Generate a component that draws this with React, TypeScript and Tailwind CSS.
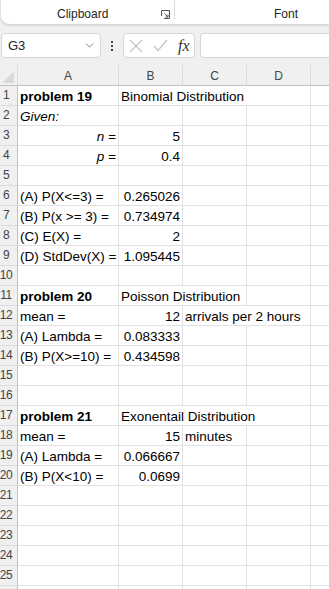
import React from 'react'
import {ChevronDown} from 'lucide-react'

interface ICell {
  span?: number
  text?: string
  right?: boolean
  bold?: boolean
  italic?: boolean
}

const colWidths = [101, 64, 64, 64]

const widthClass: {[key: number]: string} = {
  64: 'w-[64px]',
  101: 'w-[101px]',
  128: 'w-[128px]',
  192: 'w-[192px]',
}

const L = (text: string): ICell => ({text})
const R = (text: string): ICell => ({text, right: true})

const rows: ICell[][] = [
  [{text: 'problem 19', bold: true}, {text: 'Binomial Distribution', span: 3}],
  [{text: 'Given:', italic: true}],
  [{text: 'n =', italic: true, right: true}, R('5')],
  [{text: 'p =', italic: true, right: true}, R('0.4')],
  [],
  [L('(A) P(X<=3) ='), R('0.265026')],
  [L('(B) P(x >= 3) ='), R('0.734974')],
  [L('(C) E(X) ='), R('2')],
  [L('(D) StdDev(X) ='), R('1.095445')],
  [],
  [{text: 'problem 20', bold: true}, {text: 'Poisson Distribution', span: 2}],
  [L('mean ='), R('12'), {text: 'arrivals per 2 hours', span: 2}],
  [L('(A) Lambda ='), R('0.083333')],
  [L('(B) P(X>=10) ='), R('0.434598')],
  [],
  [],
  [{text: 'problem 21', bold: true}, {text: 'Exonentail Distribution', span: 3}],
  [L('mean ='), R('15'), L('minutes')],
  [L('(A) Lambda ='), R('0.066667')],
  [L('(B) P(X<10) ='), R('0.0699')],
  [],
  [],
  [],
  [],
  [],
  [],
]

// fill each row out to four cells (A..D), honouring spans
const layoutRow = (cells: ICell[]) => {
  const out: {cell: ICell; width: number}[] = []
  let col = 0
  let i = 0
  while (col < colWidths.length) {
    const cell = cells[i] || {}
    const span = cell.span || 1
    let width = 0
    for (let k = col; k < col + span; k++) width += colWidths[k]
    out.push({cell, width})
    col += span
    i++
  }
  return out
}

const LauncherIcon = () => (
  <svg width="9" height="9" viewBox="0 0 9 9" fill="none" stroke="#555" strokeWidth="1">
    <path d="M0.5 6V0.5H8.5V8.5H3" />
    <path d="M3.5 3.5L7 7M7 4.5V7H4.5" />
  </svg>
)

const App = (): React.ReactElement => {
  return (
    <div className="w-[329px] h-[589px] overflow-hidden bg-[#f0f0f0] font-['Liberation_Sans',Arial,sans-serif] text-black">
      {/* ribbon */}
      <div className="ml-[1px] h-[24px] bg-white rounded-bl-[8px] shadow-[0_1px_3px_rgba(0,0,0,0.18)] flex">
        <div className="w-[173px] flex items-end pb-[3px]">
          <span className="ml-[56px] text-[12px] leading-[14px] text-[#262626]">Clipboard</span>
          <span className="ml-auto mr-[4px] mb-[2px]">
            <LauncherIcon />
          </span>
        </div>
        <div className="w-px h-[19px] bg-[#dedede]" />
        <div className="flex-1 flex items-end pb-[3px]">
          <span className="ml-[99px] text-[12px] leading-[14px] text-[#262626]">Font</span>
        </div>
      </div>

      {/* formula bar */}
      <div className="mt-[9px] h-[25px] flex">
        <div className="ml-[1px] w-[100px] h-full bg-white border border-[#d6d6d6] rounded-[4px] flex items-center pl-[6px] pr-[4px]">
          <span className="text-[13px] text-[#222]">G3</span>
          <ChevronDown className="ml-auto w-[13px] h-[13px] text-[#666]" strokeWidth={1.5} />
        </div>
        <div className="w-[22px] flex flex-col items-center justify-center gap-[2px]">
          <span className="w-[2px] h-[2px] bg-[#444]" />
          <span className="w-[2px] h-[2px] bg-[#444]" />
          <span className="w-[2px] h-[2px] bg-[#444]" />
        </div>
        <div className="w-[72px] h-full bg-white border border-[#d6d6d6] rounded-[4px] flex items-center pl-[5px]">
          <svg width="14" height="14" viewBox="0 0 14 14" stroke="#c4c4c4" strokeWidth="1.2" fill="none">
            <path d="M1 1L13 13M13 1L1 13" />
          </svg>
          <svg className="ml-[10px]" width="15" height="13" viewBox="0 0 15 13" stroke="#c4c4c4" strokeWidth="1.2" fill="none">
            <path d="M1 7L5 11.5L14 1" />
          </svg>
          <span className="ml-[10px] font-['Liberation_Serif',serif] italic text-[16px] text-[#333] leading-none">fx</span>
        </div>
        <div className="ml-[5px] flex-1 h-full bg-white border border-[#d6d6d6] border-r-0 rounded-l-[4px]" />
      </div>

      {/* sheet */}
      <div className="mt-[7px] bg-white">
        {/* column headers */}
        <div className="flex h-[21px] bg-[#f0f0f0] border-b border-[#c2c2c2] text-[12px] text-[#444]">
          <div className="w-[18px] shrink-0 border-r border-[#dcdcdc] flex items-end justify-end pr-[3px] pb-[2px]">
            <svg width="12" height="12" viewBox="0 0 12 12">
              <path d="M12 0V12H0Z" fill="#d9d9d9" />
            </svg>
          </div>
          {['A', 'B', 'C', 'D'].map((c, i) => (
            <div
              key={c}
              className={`${widthClass[colWidths[i]]} shrink-0 border-r border-[#dcdcdc] flex items-center justify-center pt-[1px]`}
            >
              {c}
            </div>
          ))}
          <div className="flex-1" />
        </div>

        {rows.map((cells, r) => (
          <div key={r} className="flex h-[20px]">
            <div className="w-[18px] shrink-0 bg-[#f0f0f0] border-r border-r-[#c2c2c2] border-b border-b-[#dcdcdc] overflow-hidden">
              {r < 25 && (
                <div className="-ml-[6px] w-[24px] text-center text-[12px] leading-[19px] tracking-[-0.5px] text-[#444]">
                  {r + 1}
                </div>
              )}
            </div>
            {layoutRow(cells).map(({cell, width}, c) => (
              <div
                key={c}
                className={`${widthClass[width]} shrink-0 h-[20px] border-r border-b border-[#e1e1e1] px-[2px] pt-[3px] text-[13.5px] leading-[16px] whitespace-nowrap ${
                  cell.right ? 'text-right' : ''
                } ${cell.bold ? 'font-bold' : ''} ${cell.italic ? 'italic' : ''}`}
              >
                {cell.text}
              </div>
            ))}
            <div className="flex-1 h-[20px] border-b border-[#e1e1e1]" />
          </div>
        ))}
      </div>
    </div>
  )
}

export default App
